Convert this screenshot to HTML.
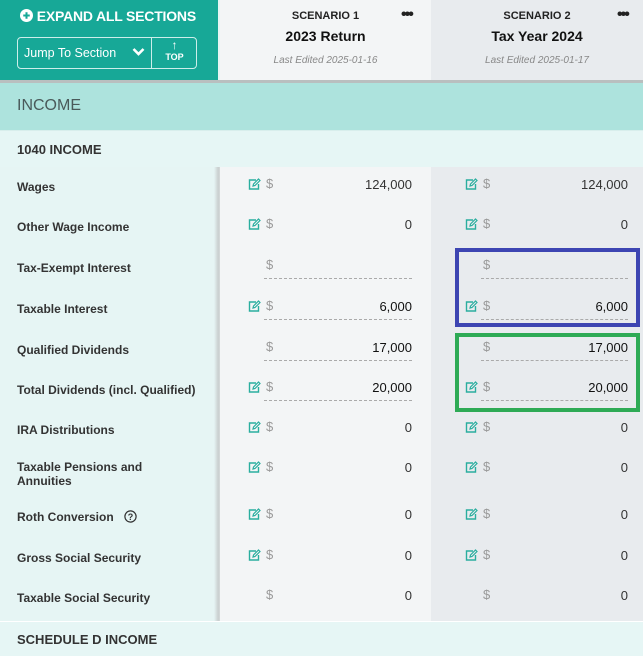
<!DOCTYPE html>
<html><head><style>
*{margin:0;padding:0;box-sizing:border-box}
body{width:643px;height:656px;overflow:hidden;font-family:"Liberation Sans",sans-serif;background:#e6f5f4;position:relative}
.abs{position:absolute}
.hdrL{left:0;top:0;width:218px;height:81px;background:#17a897;color:#fff}
.c1{left:220px;top:0;width:211px;height:656px;background:#f3f5f6}
.c2{left:431px;top:0;width:212px;height:656px;background:#e8ebee}
.shadowV{left:214px;top:167px;width:6px;height:454px;background:linear-gradient(to right,#e6f5f4,#c9cfcf 70%,#d6dada)}
.shadowH{left:0;top:80px;width:643px;height:3px;background:#b9bfbf}
.sc{position:absolute;text-align:center;color:#111}
.sc .t{font-size:11px;font-weight:bold;margin-top:10px;color:#222}
.sc .n{font-size:14px;font-weight:bold;margin-top:6px}
.sc .d{font-size:10px;font-style:italic;color:#888;margin-top:11px}
.dots{position:absolute;top:6px;font-size:16px;font-weight:bold;color:#222;letter-spacing:-2px}
.row{position:absolute;left:0;width:643px;height:40px}
.lab{position:absolute;left:17px;top:13px;font-size:12px;font-weight:bold;color:#333;line-height:14px}
.cell{position:absolute;top:0;height:40px}
.ic{position:absolute;left:28px;top:11px;width:13px;height:12px}
.dl{position:absolute;left:46px;top:7px;font-size:13px;color:#999;line-height:20px}
.v{position:absolute;right:19px;top:8px;font-size:13px;color:#333;line-height:20px}
.v.k{color:#111}
.dash{position:absolute;left:44px;right:19px;top:30px;border-top:1px dashed #aaa}
.r2 .v,.r2 .dash{right:15px}
</style></head><body>
<div class="abs c1"></div><div class="abs c2"></div>
<div class="abs hdrL">
 <div class="abs" style="left:20px;top:8px;font-size:14px;font-weight:bold;white-space:nowrap;letter-spacing:-0.2px"><svg width="13" height="13" viewBox="0 0 14 14" style="vertical-align:-1px"><circle cx="7" cy="7" r="7" fill="#fff"/><path d="M7 3.5v7M3.5 7h7" stroke="#17a897" stroke-width="2.2"/></svg> EXPAND ALL SECTIONS</div>
 <div class="abs" style="left:17px;top:37px;width:180px;height:32px;border:1px solid #cdeeea;border-radius:4px"></div>
 <div class="abs" style="left:151px;top:37px;width:1px;height:32px;background:#cdeeea"></div>
 <div class="abs" style="left:24px;top:46px;font-size:12.5px">Jump To Section</div>
 <svg class="abs" style="left:132px;top:47px" width="13" height="10" viewBox="0 0 13 10"><path d="M1.5 2l5 5 5-5" stroke="#fff" stroke-width="2.6" fill="none"/></svg>
 <div class="abs" style="left:152px;top:40px;width:45px;text-align:center;font-size:9px;font-weight:bold;line-height:11px"><span style="font-size:12px">↑</span><br>TOP</div>
</div>
<div class="sc" style="left:220px;width:211px"><div class="t">SCENARIO 1</div><div class="n">2023 Return</div><div class="d">Last Edited 2025-01-16</div></div>
<div class="dots" style="left:401px">•••</div>
<div class="sc" style="left:431px;width:212px"><div class="t">SCENARIO 2</div><div class="n">Tax Year 2024</div><div class="d">Last Edited 2025-01-17</div></div>
<div class="dots" style="left:617px">•••</div>
<div class="abs shadowH"></div>
<div class="abs" style="left:0;top:83px;width:643px;height:47px;background:#ade3dd"><div class="abs" style="left:17px;top:14px;font-size:16px;color:#4a5a5a">INCOME</div></div>
<div class="abs" style="left:0;top:130px;width:643px;height:37px;background:#e6f6f5;border-top:1px solid #d8eeec"><div class="abs" style="left:17px;top:11px;font-size:13px;font-weight:bold;color:#333">1040 INCOME</div></div>
<div class="abs shadowV"></div>
<svg width="0" height="0" style="position:absolute"><defs><symbol id="e" viewBox="0 0 13 12"><path d="M8 2H1.5v9h9V6" stroke="#2aae9f" stroke-width="1.4" fill="none"/><path d="M5 8l.5-2L10.5 1l1.5 1.5-5 5z" stroke="#2aae9f" stroke-width="1.2" fill="none"/></symbol></defs></svg>

<div class="row" style="top:167px"><div class="lab">Wages</div>
 <div class="cell" style="left:220px;width:211px"><svg class="ic"><use href="#e"/></svg><div class="dl">$</div><div class="v">124,000</div></div>
 <div class="cell r2" style="left:437px;width:206px"><svg class="ic"><use href="#e"/></svg><div class="dl">$</div><div class="v">124,000</div></div></div>
<div class="row" style="top:207px"><div class="lab">Other Wage Income</div>
 <div class="cell" style="left:220px;width:211px"><svg class="ic"><use href="#e"/></svg><div class="dl">$</div><div class="v">0</div></div>
 <div class="cell r2" style="left:437px;width:206px"><svg class="ic"><use href="#e"/></svg><div class="dl">$</div><div class="v">0</div></div></div>
<div class="row" style="top:248px"><div class="lab">Tax-Exempt Interest</div>
 <div class="cell" style="left:220px;width:211px"><div class="dl">$</div><div class="dash"></div></div>
 <div class="cell r2" style="left:437px;width:206px"><div class="dl">$</div><div class="dash"></div></div></div>
<div class="row" style="top:289px"><div class="lab">Taxable Interest</div>
 <div class="cell" style="left:220px;width:211px"><svg class="ic"><use href="#e"/></svg><div class="dl">$</div><div class="v k">6,000</div><div class="dash"></div></div>
 <div class="cell r2" style="left:437px;width:206px"><svg class="ic"><use href="#e"/></svg><div class="dl">$</div><div class="v k">6,000</div><div class="dash"></div></div></div>
<div class="row" style="top:330px"><div class="lab">Qualified Dividends</div>
 <div class="cell" style="left:220px;width:211px"><div class="dl">$</div><div class="v k">17,000</div><div class="dash"></div></div>
 <div class="cell r2" style="left:437px;width:206px"><div class="dl">$</div><div class="v k">17,000</div><div class="dash"></div></div></div>
<div class="row" style="top:370px"><div class="lab">Total Dividends (incl. Qualified)</div>
 <div class="cell" style="left:220px;width:211px"><svg class="ic"><use href="#e"/></svg><div class="dl">$</div><div class="v k">20,000</div><div class="dash"></div></div>
 <div class="cell r2" style="left:437px;width:206px"><svg class="ic"><use href="#e"/></svg><div class="dl">$</div><div class="v k">20,000</div><div class="dash"></div></div></div>
<div class="row" style="top:410px"><div class="lab">IRA Distributions</div>
 <div class="cell" style="left:220px;width:211px"><svg class="ic"><use href="#e"/></svg><div class="dl">$</div><div class="v">0</div></div>
 <div class="cell r2" style="left:437px;width:206px"><svg class="ic"><use href="#e"/></svg><div class="dl">$</div><div class="v">0</div></div></div>
<div class="row" style="top:450px"><div class="lab" style="top:10px">Taxable Pensions and<br>Annuities</div>
 <div class="cell" style="left:220px;width:211px"><svg class="ic"><use href="#e"/></svg><div class="dl">$</div><div class="v">0</div></div>
 <div class="cell r2" style="left:437px;width:206px"><svg class="ic"><use href="#e"/></svg><div class="dl">$</div><div class="v">0</div></div></div>
<div class="row" style="top:497px"><div class="lab">Roth Conversion &nbsp;&nbsp;<svg width="13" height="13" viewBox="0 0 13 13" style="vertical-align:-2px"><circle cx="6.5" cy="6.5" r="5.6" stroke="#333" stroke-width="1.2" fill="none"/><text x="6.5" y="9.8" font-size="9" font-weight="bold" text-anchor="middle" fill="#333" font-family="Liberation Sans">?</text></svg></div>
 <div class="cell" style="left:220px;width:211px"><svg class="ic"><use href="#e"/></svg><div class="dl">$</div><div class="v">0</div></div>
 <div class="cell r2" style="left:437px;width:206px"><svg class="ic"><use href="#e"/></svg><div class="dl">$</div><div class="v">0</div></div></div>
<div class="row" style="top:538px"><div class="lab">Gross Social Security</div>
 <div class="cell" style="left:220px;width:211px"><svg class="ic"><use href="#e"/></svg><div class="dl">$</div><div class="v">0</div></div>
 <div class="cell r2" style="left:437px;width:206px"><svg class="ic"><use href="#e"/></svg><div class="dl">$</div><div class="v">0</div></div></div>
<div class="row" style="top:578px"><div class="lab">Taxable Social Security</div>
 <div class="cell" style="left:220px;width:211px"><div class="dl">$</div><div class="v">0</div></div>
 <div class="cell r2" style="left:437px;width:206px"><div class="dl">$</div><div class="v">0</div></div></div>

<div class="abs" style="left:455px;top:248px;width:185px;height:79px;border:4px solid #3d45b2"></div>
<div class="abs" style="left:455px;top:333px;width:185px;height:79px;border:4px solid #2eaa55"></div>
<div class="abs" style="left:0;top:621px;width:643px;height:35px;background:#e6f6f5;border-top:1px solid #fff"><div class="abs" style="left:17px;top:10px;font-size:13px;font-weight:bold;color:#333">SCHEDULE D INCOME</div></div>
</body></html>
